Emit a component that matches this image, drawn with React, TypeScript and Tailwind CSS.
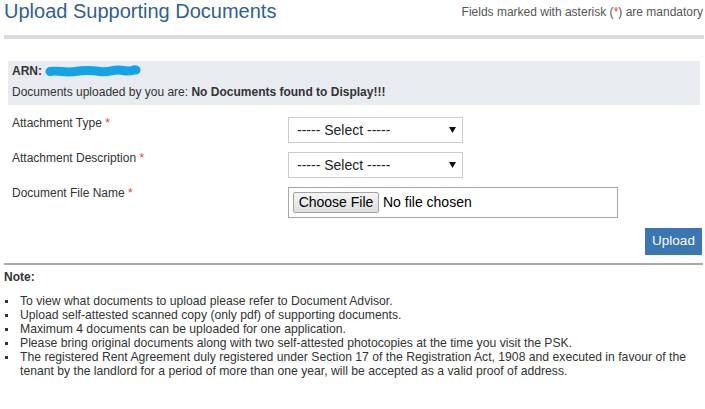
import React from "react";

const Star = () => <span className="text-[#e8383d]">*</span>;

const SelectBox = () => (
  <div className="mt-[2px] flex h-[26px] w-[175px] items-center justify-between border border-[#cccccc] bg-white pl-[8px] pr-[6px] text-[14px] text-[#222]">
    <span>----- Select -----</span>
    <svg width="7" height="6" viewBox="0 0 7 6">
      <polygon points="0,0 7,0 3.5,6" fill="#111" />
    </svg>
  </div>
);

const Label = ({ children }: { children: React.ReactNode }) => (
  <div className="mt-[1px] w-[276px] shrink-0 text-[12px] leading-[14px] text-[#333]">{children}</div>
);

const notes = [
  "To view what documents to upload please refer to Document Advisor.",
  "Upload self-attested scanned copy (only pdf) of supporting documents.",
  "Maximum 4 documents can be uploaded for one application.",
  "Please bring original documents along with two self-attested photocopies at the time you visit the PSK.",
  "The registered Rent Agreement duly registered under Section 17 of the Registration Act, 1908 and executed in favour of the tenant by the landlord for a period of more than one year, will be accepted as a valid proof of address.",
];

export default function App() {
  return (
    <div
      className="h-[409px] w-[705px] overflow-hidden bg-white text-[#333]"
      style={{ fontFamily: '"Liberation Sans", Arial, sans-serif' }}
    >
      {/* Header */}
      <div className="flex items-start justify-between pl-[4px] pr-[2px]">
        <h1 className="text-[20px] leading-[23px] text-[#2e6193]">Upload Supporting Documents</h1>
        <div className="mt-[5px] text-[12px] leading-[14px] text-[#555]">
          Fields marked with asterisk (<Star />) are mandatory
        </div>
      </div>
      <div className="ml-[4px] mt-[12px] h-[4px] w-[700px] bg-[#d8dce0]" />

      {/* Info panel */}
      <div className="ml-[8px] mt-[22px] h-[44px] w-[692px] bg-[#e8ebf0] pl-[4px] pt-[3px] text-[12px] leading-[14px]">
        <div className="flex items-center">
          <span className="font-bold">ARN:</span>
          <svg width="96" height="12" viewBox="0 0 96 12" className="ml-[3px]">
            <path
              d="M5 6.5 C12 5, 20 8, 30 6.5 S 45 5, 55 6.5 S 68 3.5, 78 5.5 S 88 4, 91 5"
              stroke="#13a4e8"
              strokeWidth="9"
              strokeLinecap="round"
              fill="none"
            />
          </svg>
        </div>
        <div className="mt-[7px]">
          Documents uploaded by you are: <span className="font-bold">No Documents found to Display!!!</span>
        </div>
      </div>

      {/* Form */}
      <div className="mt-[10px] flex flex-col gap-[7px] pl-[12px]">
        <div className="flex items-start">
          <Label>
            Attachment Type <Star />
          </Label>
          <SelectBox />
        </div>
        <div className="flex items-start">
          <Label>
            Attachment Description <Star />
          </Label>
          <SelectBox />
        </div>
        <div className="flex items-start">
          <Label>
            Document File Name <Star />
          </Label>
          <div className="mt-[2px] flex h-[31px] w-[330px] items-center border border-[#a9a9a9] bg-white pl-[4px] text-[14px] text-black">
            <div className="flex h-[21px] w-[86px] items-center justify-center rounded-[2px] border border-[#a3a3a3] bg-gradient-to-b from-[#f4f4f4] to-[#dedede]">
              Choose File
            </div>
            <span className="ml-[4px]">No file chosen</span>
          </div>
        </div>
      </div>

      <div className="mt-[10px] flex justify-end pr-[3px]">
        <button className="flex h-[27px] w-[57px] items-center justify-center bg-[#3a76b1] text-[13.5px] text-white">
          Upload
        </button>
      </div>

      <div className="ml-[4px] mt-[8px] h-[2px] w-[699px] bg-[#ababab]" />

      {/* Note */}
      <div className="mt-[5px] pl-[4px] text-[12px] leading-[14px]">
        <div className="font-bold">Note:</div>
        <ul className="mt-[10px] text-[12.2px]">
          {notes.map((n, i) => (
            <li key={i} className="flex items-start">
              <span className="ml-[1px] mr-[12px] mt-[6px] h-[3px] w-[3px] shrink-0 bg-[#333]" />
              <span className="w-[685px]">{n}</span>
            </li>
          ))}
        </ul>
      </div>
    </div>
  );
}
